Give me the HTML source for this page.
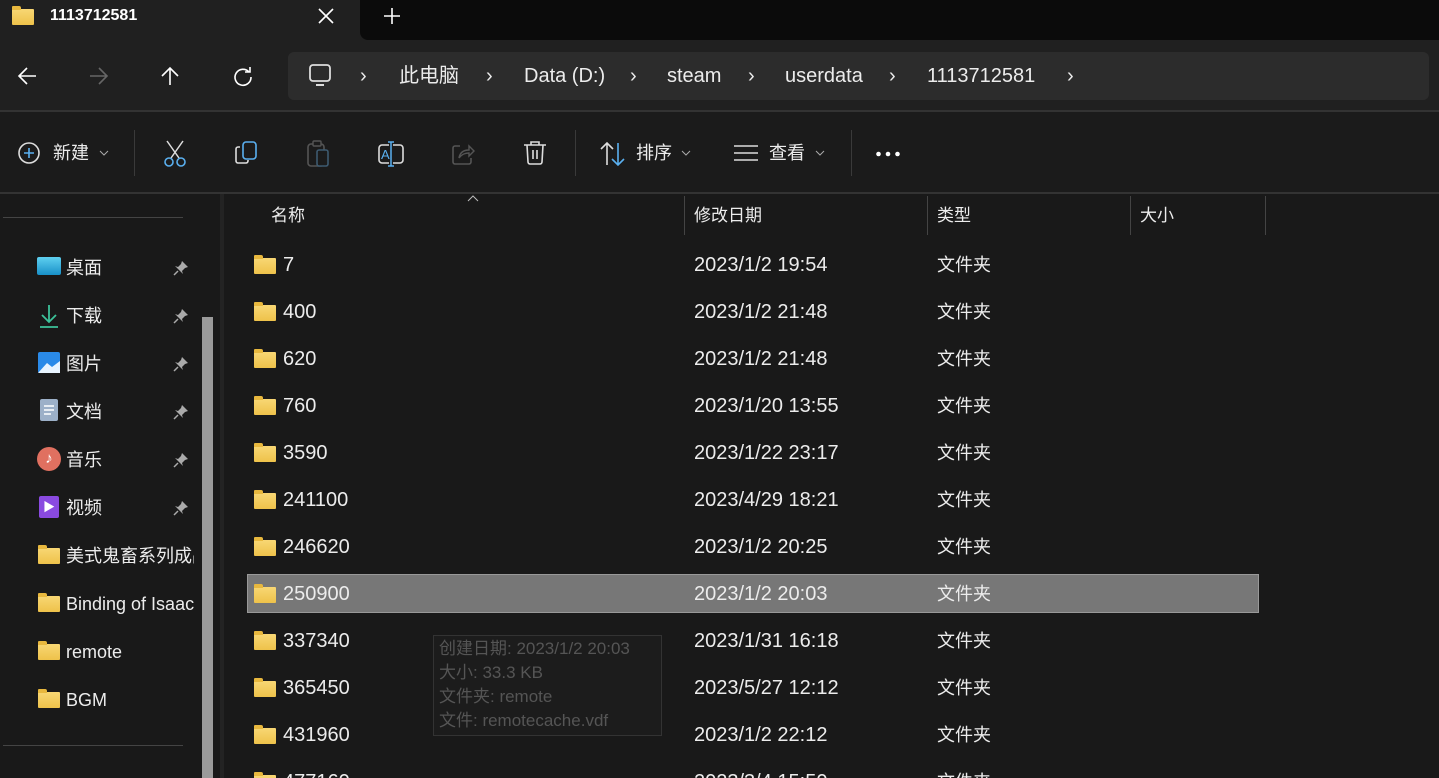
<!DOCTYPE html><html><head><meta charset="utf-8"><style>
*{margin:0;padding:0;box-sizing:border-box}
html,body{width:1439px;height:778px;overflow:hidden}
body{background:#191919;font-family:"Liberation Sans","Noto Sans CJK SC",sans-serif;color:#fff;position:relative}
.a{position:absolute;white-space:nowrap;line-height:24px}
.f{position:absolute;width:22px;height:16px;background:linear-gradient(#f8d774,#eec24a);border-radius:1px}
.f:before{content:"";position:absolute;left:0;top:-3px;width:9px;height:4px;background:#e8b83e;border-radius:1px 2px 0 0}
.t{font-size:20px;color:#ececec}
.s{font-size:18px;color:#ececec}
.b{font-size:20px;color:#ececec;top:64px}
svg{position:absolute;overflow:visible}
</style></head><body>
<div class="a" style="left:0;top:0;width:1439px;height:110px;background:#202020"></div>
<div class="a" style="left:360px;top:0;width:1079px;height:40px;background:#0b0b0b;border-bottom-left-radius:8px"></div>
<div class="f" style="left:12px;top:9px"></div>
<div class="a" style="left:50px;top:4px;font-size:16px;font-weight:bold">1113712581</div>
<svg style="left:318px;top:8px" width="16" height="16"><path d="M1 1L15 15M15 1L1 15" stroke="#fff" stroke-width="1.6"/></svg>
<svg style="left:384px;top:8px" width="16" height="16"><path d="M8 0V16M0 8H16" stroke="#fff" stroke-width="1.6"/></svg>
<svg style="left:17px;top:66px" width="20" height="20"><path d="M19 10H2M10 2L2 10L10 18" stroke="#fff" stroke-width="1.6" fill="none"/></svg>
<svg style="left:89px;top:66px" width="20" height="20"><path d="M1 10H18M10 2L18 10L10 18" stroke="#666" stroke-width="1.6" fill="none"/></svg>
<svg style="left:160px;top:66px" width="20" height="20"><path d="M10 19V2M2 10L10 2L18 10" stroke="#fff" stroke-width="1.6" fill="none"/></svg>
<svg style="left:233px;top:66px" width="20" height="20"><path d="M16 6A8 8 0 1 0 18 11M17 1V6H12" stroke="#fff" stroke-width="1.6" fill="none"/></svg>
<div class="a" style="left:288px;top:52px;width:1141px;height:48px;background:#2c2c2c;border-radius:6px"></div>
<svg style="left:309px;top:64px" width="22" height="24"><rect x="1" y="1" width="20" height="16" rx="3" stroke="#ddd" stroke-width="1.8" fill="none"/><path d="M7 21H15" stroke="#ddd" stroke-width="2"/></svg>
<div class="a b" style="left:360px">›</div>
<div class="a b" style="left:399px">此电脑</div>
<div class="a b" style="left:486px">›</div>
<div class="a b" style="left:524px">Data (D:)</div>
<div class="a b" style="left:630px">›</div>
<div class="a b" style="left:667px">steam</div>
<div class="a b" style="left:748px">›</div>
<div class="a b" style="left:785px">userdata</div>
<div class="a b" style="left:889px">›</div>
<div class="a b" style="left:927px">1113712581</div>
<div class="a b" style="left:1067px">›</div>
<div class="a" style="left:0;top:110px;width:1439px;height:2px;background:#333"></div>
<div class="a" style="left:0;top:112px;width:1439px;height:81px;background:#1b1b1b"></div>
<svg style="left:18px;top:142px" width="22" height="22"><circle cx="11" cy="11" r="10" stroke="#ddd" stroke-width="1.6" fill="none"/><path d="M11 6V16M6 11H16" stroke="#5ab0f0" stroke-width="1.6"/></svg>
<div class="a s" style="left:53px;top:141px">新建</div>
<svg style="left:100px;top:151px" width="8" height="5"><path d="M0 0L4 4L8 0" stroke="#aaa" fill="none"/></svg>
<div class="a" style="left:134px;top:130px;width:1px;height:46px;background:#3a3a3a"></div>
<svg style="left:163px;top:141px" width="24" height="26"><path d="M4 0L16 17M20 0L8 17" stroke="#ddd" stroke-width="1.5" fill="none"/><circle cx="6" cy="21" r="4" stroke="#5ab0f0" stroke-width="1.6" fill="none"/><circle cx="18" cy="21" r="4" stroke="#5ab0f0" stroke-width="1.6" fill="none"/></svg>
<svg style="left:235px;top:141px" width="24" height="24"><path d="M5 6H3a2 2 0 0 0-2 2V20a2 2 0 0 0 2 2H11a2 2 0 0 0 2-2V19" stroke="#ddd" stroke-width="1.6" fill="none"/><rect x="8" y="1" width="13" height="17" rx="3" stroke="#5ab0f0" stroke-width="1.6" fill="none"/></svg>
<svg style="left:307px;top:141px" width="24" height="26"><rect x="1" y="3" width="16" height="22" rx="3" stroke="#555" stroke-width="1.6" fill="none"/><rect x="6" y="0" width="8" height="5" rx="1" stroke="#555" stroke-width="1.4" fill="#1b1b1b"/><rect x="10" y="9" width="11" height="16" rx="2" stroke="#3d5a70" stroke-width="1.6" fill="#1b1b1b"/></svg>
<svg style="left:378px;top:141px" width="26" height="26"><rect x="1" y="4" width="24" height="18" rx="3" stroke="#ddd" stroke-width="1.6" fill="none"/><rect x="11" y="0" width="4" height="26" fill="#1b1b1b"/><path d="M13 1V25M10 1H16M10 25H16" stroke="#5ab0f0" stroke-width="1.5"/><text x="3" y="18" font-size="13" fill="#5ab0f0" font-family="Liberation Sans">A</text></svg>
<svg style="left:451px;top:142px" width="24" height="24"><path d="M9 4H4a2 2 0 0 0-2 2V20a2 2 0 0 0 2 2H18a2 2 0 0 0 2-2V16" stroke="#555" stroke-width="1.6" fill="none"/><path d="M8 16C9 10 13 8 18 8V4L23 9L18 14V11C14 11 11 12 8 16Z" stroke="#555" stroke-width="1.4" fill="none"/></svg>
<svg style="left:524px;top:141px" width="22" height="24"><path d="M0 4H22M7 4V1H15V4M3 4L4 21a2 2 0 0 0 2 2H16a2 2 0 0 0 2-2L19 4M9 9V18M13 9V18" stroke="#ddd" stroke-width="1.6" fill="none"/></svg>
<div class="a" style="left:575px;top:130px;width:1px;height:46px;background:#3a3a3a"></div>
<svg style="left:600px;top:142px" width="26" height="24"><path d="M7 23V1M1 7L7 1L13 7" stroke="#ddd" stroke-width="1.6" fill="none"/><path d="M18 1V23M12 17L18 23L24 17" stroke="#5ab0f0" stroke-width="1.6" fill="none"/></svg>
<div class="a s" style="left:636px;top:141px">排序</div>
<svg style="left:682px;top:151px" width="8" height="5"><path d="M0 0L4 4L8 0" stroke="#aaa" fill="none"/></svg>
<svg style="left:734px;top:145px" width="24" height="16"><path d="M0 1H24M0 8H24M0 15H24" stroke="#ddd" stroke-width="1.6"/></svg>
<div class="a s" style="left:769px;top:141px">查看</div>
<svg style="left:816px;top:151px" width="8" height="5"><path d="M0 0L4 4L8 0" stroke="#aaa" fill="none"/></svg>
<div class="a" style="left:851px;top:130px;width:1px;height:46px;background:#3a3a3a"></div>
<svg style="left:876px;top:151px" width="26" height="6"><circle cx="2.5" cy="3" r="2.3" fill="#fff"/><circle cx="12" cy="3" r="2.3" fill="#fff"/><circle cx="21.5" cy="3" r="2.3" fill="#fff"/></svg>
<div class="a" style="left:0;top:192px;width:1439px;height:2px;background:#333"></div>
<div class="a" style="left:3px;top:217px;width:180px;height:1px;background:#444"></div>
<div class="a" style="left:3px;top:745px;width:180px;height:1px;background:#444"></div>
<div class="a" style="left:202px;top:317px;width:11px;height:461px;background:#9a9a9a"></div>
<div class="a" style="left:220px;top:194px;width:4px;height:584px;background:#232323"></div>
<div class="a" style="left:37px;top:257px;width:24px;height:18px;background:linear-gradient(#5fd0f0,#1890c8);border-radius:2px"></div>
<svg style="left:38px;top:304px" width="22" height="24"><path d="M11 1V18M4 11L11 18L18 11M2 23H20" stroke="#3cc29a" stroke-width="1.8" fill="none"/></svg>
<svg style="left:38px;top:352px" width="22" height="21"><rect width="22" height="21" rx="2" fill="#2a8ae8"/><path d="M0 21L9 11L14 15L22 9V21Z" fill="#e8f4ff"/></svg>
<svg style="left:40px;top:399px" width="18" height="22"><rect width="18" height="22" rx="2" fill="#9cb0c8"/><path d="M4 7H14M4 11H14M4 15H11" stroke="#fff" stroke-width="1.4"/></svg>
<div class="a" style="left:37px;top:447px;width:24px;height:24px;background:#e07060;border-radius:50%;font-size:15px;text-align:center;line-height:24px">♪</div>
<div class="a" style="left:39px;top:496px;width:20px;height:22px;background:#8a4ae0;border-radius:2px;font-size:12px;line-height:22px;text-align:center">▶</div>
<div class="f" style="left:38px;top:548px"></div><div class="f" style="left:38px;top:596px"></div><div class="f" style="left:38px;top:644px"></div><div class="f" style="left:38px;top:692px"></div>
<div class="a s" style="left:66px;top:256px">桌面</div>
<div class="a s" style="left:66px;top:304px">下载</div>
<div class="a s" style="left:66px;top:352px">图片</div>
<div class="a s" style="left:66px;top:400px">文档</div>
<div class="a s" style="left:66px;top:448px">音乐</div>
<div class="a s" style="left:66px;top:496px">视频</div>
<div class="a s" style="left:66px;top:544px;width:128px;overflow:hidden">美式鬼畜系列成品</div>
<div class="a s" style="left:66px;top:592px;width:128px;overflow:hidden">Binding of Isaac</div>
<div class="a s" style="left:66px;top:640px">remote</div>
<div class="a s" style="left:66px;top:688px">BGM</div>
<div id="pins"></div>
<svg style="left:468px;top:196px" width="10" height="6"><path d="M0 5L5 0L10 5" stroke="#bbb" fill="none"/></svg>
<div class="a s" style="left:271px;top:204px;font-size:17px">名称</div>
<div class="a s" style="left:694px;top:204px;font-size:17px">修改日期</div>
<div class="a s" style="left:937px;top:204px;font-size:17px">类型</div>
<div class="a s" style="left:1140px;top:204px;font-size:17px">大小</div>
<div class="a" style="left:684px;top:196px;width:1px;height:39px;background:#444"></div>
<div class="a" style="left:927px;top:196px;width:1px;height:39px;background:#444"></div>
<div class="a" style="left:1130px;top:196px;width:1px;height:39px;background:#444"></div>
<div class="a" style="left:1265px;top:196px;width:1px;height:39px;background:#444"></div>
<div class="a" style="left:247px;top:574px;width:1012px;height:39px;background:#777;border:1px solid #999"></div>
<div id="rows"></div>
<div class="a" style="left:433px;top:635px;width:229px;height:101px;background:#1c1c1c;border:1px solid #333;font-size:17px;color:#555;line-height:24px;padding:1px 5px">创建日期: 2023/1/2 20:03<br>大小: 33.3 KB<br>文件夹: remote<br>文件: remotecache.vdf</div>
<script>
var d=[["7","2023/1/2 19:54"],["400","2023/1/2 21:48"],["620","2023/1/2 21:48"],["760","2023/1/20 13:55"],["3590","2023/1/22 23:17"],["241100","2023/4/29 18:21"],["246620","2023/1/2 20:25"],["250900","2023/1/2 20:03"],["337340","2023/1/31 16:18"],["365450","2023/5/27 12:12"],["431960","2023/1/2 22:12"],["477160","2023/3/4 15:50"]];
var h="";d.forEach(function(r,i){var y=265+47*i;h+='<div class="f" style="left:254px;top:'+(y-7)+'px"></div><div class="a t" style="left:283px;top:'+(y-12)+'px">'+r[0]+'</div><div class="a t" style="left:694px;top:'+(y-12)+'px">'+r[1]+'</div><div class="a s" style="left:937px;top:'+(y-12)+'px">文件夹</div>';});
document.getElementById("rows").innerHTML=h;
var p="";for(var i=0;i<6;i++){p+='<svg style="left:173px;top:'+(260+48*i)+'px" width="16" height="16"><path d="M9 1L15 7L12 8L9 11L10 14L2 6L5 7L8 4Z" fill="#aaa"/><path d="M5 11L1 15" stroke="#aaa" stroke-width="1.5"/></svg>';}
document.getElementById("pins").innerHTML=p;
</script>
</body></html>
